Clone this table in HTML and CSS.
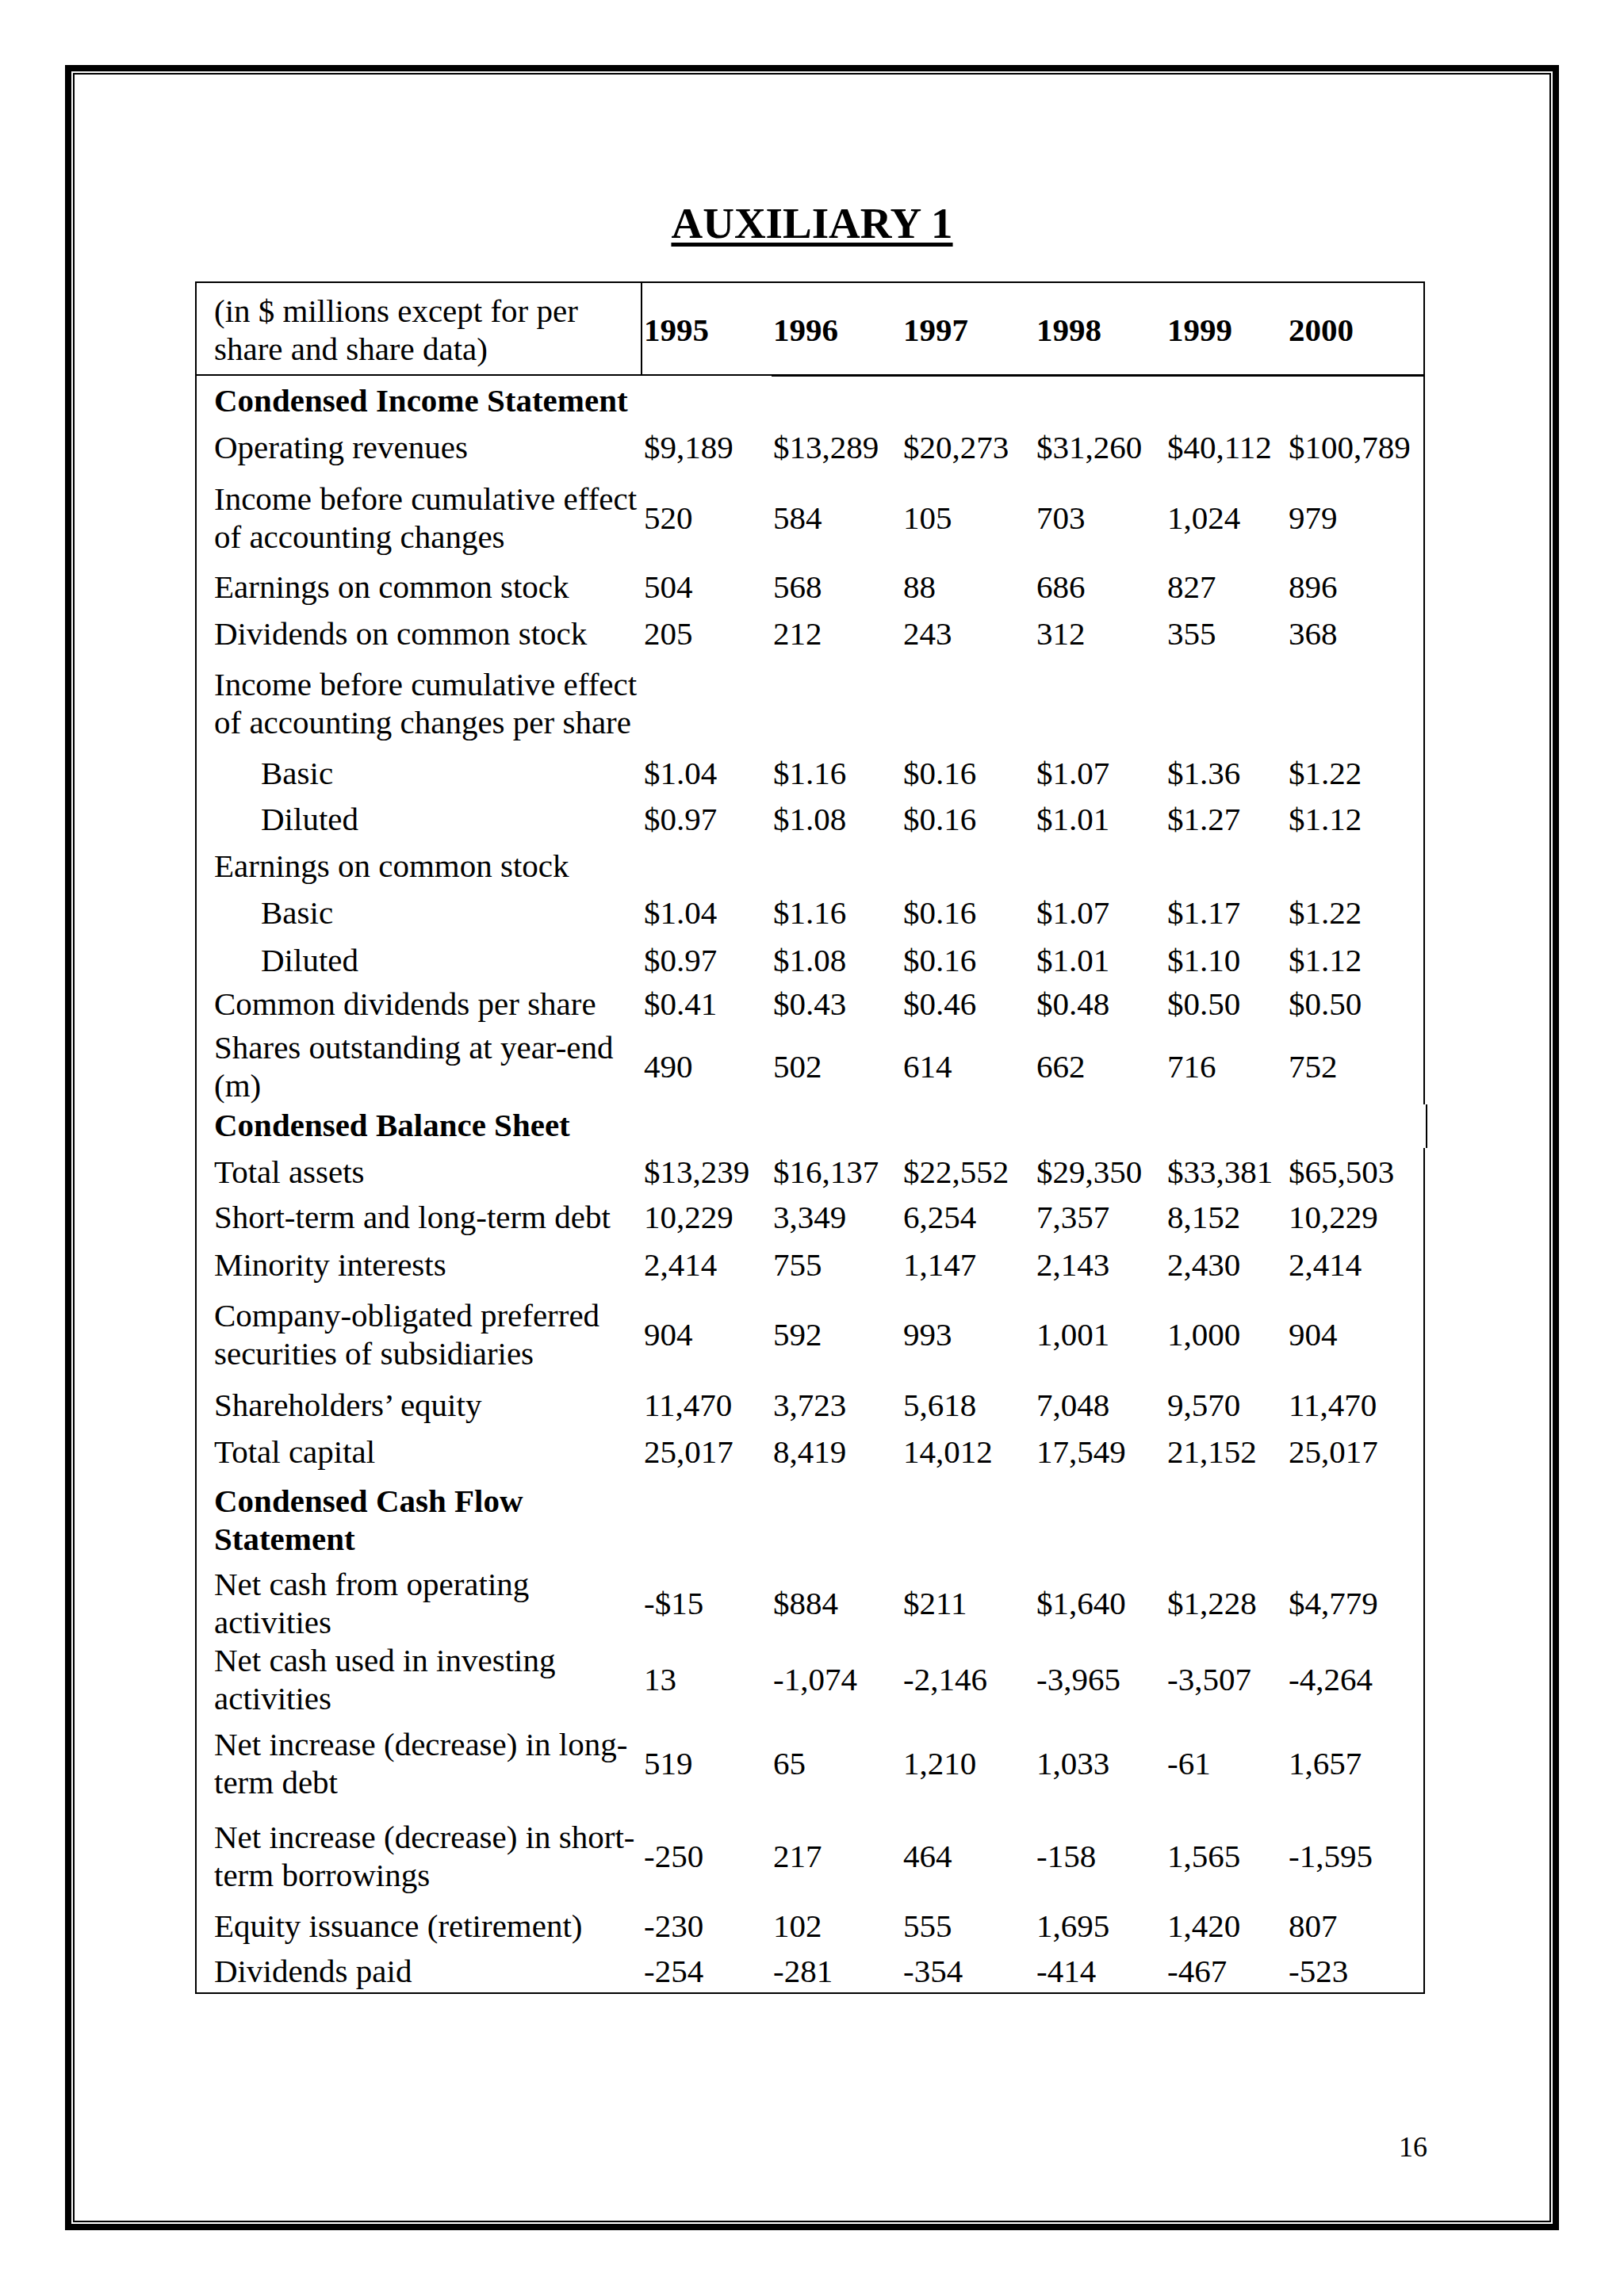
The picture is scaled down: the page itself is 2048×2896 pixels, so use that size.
FILE: index.html
```html
<!DOCTYPE html>
<html lang="en">
<head>
<meta charset="utf-8">
<title>Auxiliary 1</title>
<link rel="stylesheet" href="styles.css">
</head>
<body>
<div class="frame">
  <div class="frame-inner">
    <h1 class="title">AUXILIARY 1</h1>

    <div class="table">
      <div class="row head">
        <div class="cell label head-label">(in $ millions except for per<br>share and share data)</div>
        <div class="cell year">1995</div>
        <div class="cell year ruled">1996</div>
        <div class="cell year ruled">1997</div>
        <div class="cell year ruled">1998</div>
        <div class="cell year ruled">1999</div>
        <div class="cell year ruled">2000</div>
      </div>

      <div class="row g7">
        <div class="cell label section">Condensed Income Statement</div>
      </div>
      <div class="row g11">
        <div class="cell label">Operating revenues</div>
        <div class="cell">$9,189</div><div class="cell">$13,289</div><div class="cell">$20,273</div><div class="cell">$31,260</div><div class="cell">$40,112</div><div class="cell">$100,789</div>
      </div>
      <div class="row g17">
        <div class="cell label">Income before cumulative effect<br>of accounting changes</div>
        <div class="cell">520</div><div class="cell">584</div><div class="cell">105</div><div class="cell">703</div><div class="cell">1,024</div><div class="cell">979</div>
      </div>
      <div class="row g15">
        <div class="cell label">Earnings on common stock</div>
        <div class="cell">504</div><div class="cell">568</div><div class="cell">88</div><div class="cell">686</div><div class="cell">827</div><div class="cell">896</div>
      </div>
      <div class="row g11">
        <div class="cell label">Dividends on common stock</div>
        <div class="cell">205</div><div class="cell">212</div><div class="cell">243</div><div class="cell">312</div><div class="cell">355</div><div class="cell">368</div>
      </div>
      <div class="row g16">
        <div class="cell label">Income before cumulative effect<br>of accounting changes per share</div>
      </div>
      <div class="row g16">
        <div class="cell label indent">Basic</div>
        <div class="cell">$1.04</div><div class="cell">$1.16</div><div class="cell">$0.16</div><div class="cell">$1.07</div><div class="cell">$1.36</div><div class="cell">$1.22</div>
      </div>
      <div class="row g10">
        <div class="cell label indent">Diluted</div>
        <div class="cell">$0.97</div><div class="cell">$1.08</div><div class="cell">$0.16</div><div class="cell">$1.01</div><div class="cell">$1.27</div><div class="cell">$1.12</div>
      </div>
      <div class="row g11">
        <div class="cell label">Earnings on common stock</div>
      </div>
      <div class="row g11">
        <div class="cell label indent">Basic</div>
        <div class="cell">$1.04</div><div class="cell">$1.16</div><div class="cell">$0.16</div><div class="cell">$1.07</div><div class="cell">$1.17</div><div class="cell">$1.22</div>
      </div>
      <div class="row g12">
        <div class="cell label indent">Diluted</div>
        <div class="cell">$0.97</div><div class="cell">$1.08</div><div class="cell">$0.16</div><div class="cell">$1.01</div><div class="cell">$1.10</div><div class="cell">$1.12</div>
      </div>
      <div class="row g7">
        <div class="cell label">Common dividends per share</div>
        <div class="cell">$0.41</div><div class="cell">$0.43</div><div class="cell">$0.46</div><div class="cell">$0.48</div><div class="cell">$0.50</div><div class="cell">$0.50</div>
      </div>
      <div class="row g7">
        <div class="cell label">Shares outstanding at year-end<br>(m)</div>
        <div class="cell">490</div><div class="cell">502</div><div class="cell">614</div><div class="cell">662</div><div class="cell">716</div><div class="cell">752</div>
      </div>

      <div class="row jog">
        <div class="cell label section">Condensed Balance Sheet</div>
      </div>
      <div class="row g6">
        <div class="cell label">Total assets</div>
        <div class="cell">$13,239</div><div class="cell">$16,137</div><div class="cell">$22,552</div><div class="cell">$29,350</div><div class="cell">$33,381</div><div class="cell">$65,503</div>
      </div>
      <div class="row g9">
        <div class="cell label">Short-term and long-term debt</div>
        <div class="cell">10,229</div><div class="cell">3,349</div><div class="cell">6,254</div><div class="cell">7,357</div><div class="cell">8,152</div><div class="cell">10,229</div>
      </div>
      <div class="row g12">
        <div class="cell label">Minority interests</div>
        <div class="cell">2,414</div><div class="cell">755</div><div class="cell">1,147</div><div class="cell">2,143</div><div class="cell">2,430</div><div class="cell">2,414</div>
      </div>
      <div class="row g16">
        <div class="cell label">Company-obligated preferred<br>securities of subsidiaries</div>
        <div class="cell">904</div><div class="cell">592</div><div class="cell">993</div><div class="cell">1,001</div><div class="cell">1,000</div><div class="cell">904</div>
      </div>
      <div class="row g17">
        <div class="cell label">Shareholders’ equity</div>
        <div class="cell">11,470</div><div class="cell">3,723</div><div class="cell">5,618</div><div class="cell">7,048</div><div class="cell">9,570</div><div class="cell">11,470</div>
      </div>
      <div class="row g11">
        <div class="cell label">Total capital</div>
        <div class="cell">25,017</div><div class="cell">8,419</div><div class="cell">14,012</div><div class="cell">17,549</div><div class="cell">21,152</div><div class="cell">25,017</div>
      </div>

      <div class="row g14">
        <div class="cell label section">Condensed Cash Flow<br>Statement</div>
      </div>
      <div class="row g9">
        <div class="cell label">Net cash from operating<br>activities</div>
        <div class="cell">-$15</div><div class="cell">$884</div><div class="cell">$211</div><div class="cell">$1,640</div><div class="cell">$1,228</div><div class="cell">$4,779</div>
      </div>
      <div class="row g0">
        <div class="cell label">Net cash used in investing<br>activities</div>
        <div class="cell">13</div><div class="cell">-1,074</div><div class="cell">-2,146</div><div class="cell">-3,965</div><div class="cell">-3,507</div><div class="cell">-4,264</div>
      </div>
      <div class="row g10">
        <div class="cell label">Net increase (decrease) in long-<br>term debt</div>
        <div class="cell">519</div><div class="cell">65</div><div class="cell">1,210</div><div class="cell">1,033</div><div class="cell">-61</div><div class="cell">1,657</div>
      </div>
      <div class="row g21">
        <div class="cell label">Net increase (decrease) in short-<br>term borrowings</div>
        <div class="cell">-250</div><div class="cell">217</div><div class="cell">464</div><div class="cell">-158</div><div class="cell">1,565</div><div class="cell">-1,595</div>
      </div>
      <div class="row g16">
        <div class="cell label">Equity issuance (retirement)</div>
        <div class="cell">-230</div><div class="cell">102</div><div class="cell">555</div><div class="cell">1,695</div><div class="cell">1,420</div><div class="cell">807</div>
      </div>
      <div class="row g9 last">
        <div class="cell label">Dividends paid</div>
        <div class="cell">-254</div><div class="cell">-281</div><div class="cell">-354</div><div class="cell">-414</div><div class="cell">-467</div><div class="cell">-523</div>
      </div>
    </div>

    <div class="page-num">16</div>
  </div>
</div>
</body>
</html>
```

FILE: styles.css
```css
html, body {
  margin: 0;
  padding: 0;
  background: #ffffff;
}

body {
  font-family: "Liberation Serif", "Times New Roman", serif;
  color: #000000;
}

.frame {
  box-sizing: border-box;
  width: 1884px;
  height: 2731px;
  margin: 82px 0 0 82px;
  border: 8px solid #000000;
  padding: 2px;
}

.frame-inner {
  box-sizing: border-box;
  height: 100%;
  border: 2px solid #000000;
  overflow: hidden;
}

.title {
  margin: 156px 0 42px;
  font-size: 55px;
  font-weight: bold;
  line-height: normal;
  text-align: center;
  text-decoration: underline;
  text-decoration-thickness: 5px;
  text-underline-offset: 6px;
  text-decoration-skip-ink: none;
}

.table {
  box-sizing: border-box;
  width: 1551px;
  margin-left: 152px;
  border-top: 2px solid #000000;
  border-left: 2px solid #000000;
  border-bottom: 2px solid #000000;
  font-size: 41px;
  line-height: 48px;
}

.row {
  display: grid;
  grid-template-columns: 562px 163px 164px 168px 165px 153px 172px;
  border-right: 2px solid #000000;
}

.cell {
  box-sizing: border-box;
  display: flex;
  align-items: center;
  padding-left: 2px;
  white-space: nowrap;
}

.cell.label {
  display: block;
  padding-left: 22px;
}

.cell.indent {
  padding-left: 81px;
}

.section {
  font-weight: bold;
}

/* header row */
.head {
  border-bottom: 2px solid #000000;
}

.head .cell {
  padding-top: 11px;
  padding-bottom: 8px;
}

.head-label {
  border-right: 2px solid #000000;
}

.year {
  font-weight: bold;
}

.year.ruled {
  box-shadow: 0 3px 0 #000000;
}

/* vertical rhythm between rows */
.g0 { padding-top: 0; }
.g6 { padding-top: 6px; }
.g7 { padding-top: 7px; }
.g9 { padding-top: 9px; }
.g10 { padding-top: 10px; }
.g11 { padding-top: 11px; }
.g12 { padding-top: 12px; }
.g14 { padding-top: 14px; }
.g15 { padding-top: 15px; }
.g16 { padding-top: 16px; }
.g17 { padding-top: 17px; }
.g21 { padding-top: 21px; }

.jog {
  margin-right: -3px;
  padding-top: 2px;
  padding-bottom: 5px;
}

.last {
  padding-bottom: 3px;
}

.page-num {
  width: 1554px;
  margin: 172px 0 0 152px;
  font-size: 36px;
  line-height: normal;
  text-align: right;
}
```
